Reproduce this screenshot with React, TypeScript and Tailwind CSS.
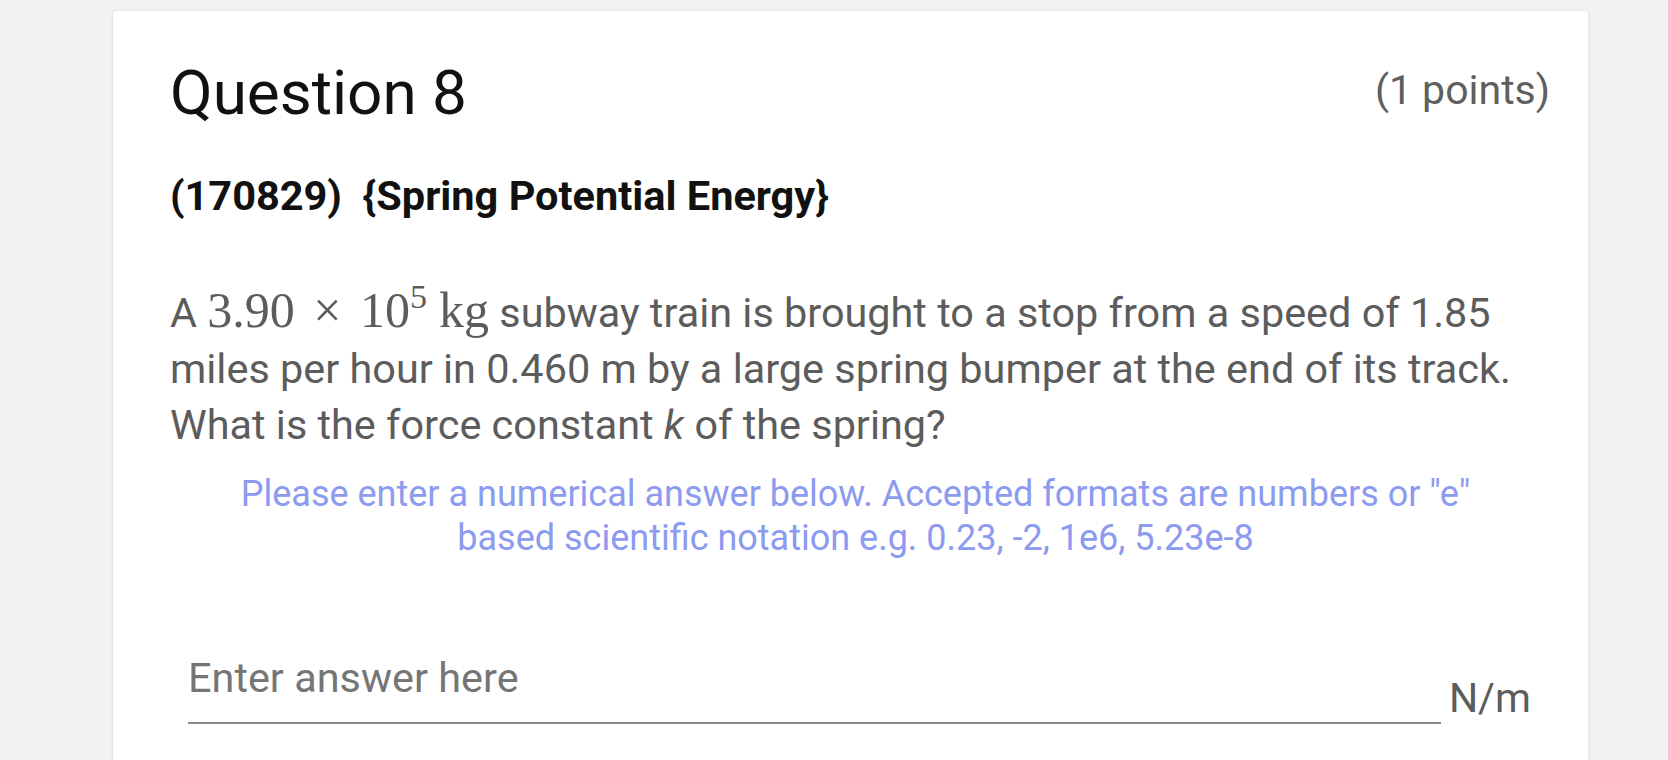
import React from "react";

export default function App() {
  return (
    <div className="h-[760px] w-full overflow-hidden bg-[#f2f2f2] font-['Roboto',sans-serif]">
      <div className="ml-[113px] mt-[11px] w-[1475px] h-[800px] rounded-[4px] bg-white shadow-[0_1px_4px_rgba(0,0,0,0.12)] pl-[57px] pr-[57px] pt-[51px]">
        <div className="flex items-center justify-between mr-[-19px]">
          <h1 className="text-[62px] leading-[62px] font-normal text-[#111111]">Question 8</h1>
          <span className="mb-[6px] text-[41px] leading-[41px] text-[#5f5f5f]">(1 points)</span>
        </div>
        <div className="mt-[51px] text-[41.5px] leading-[42px] font-bold text-[#111111] whitespace-pre">
          (170829)  {"{"}Spring Potential Energy{"}"}
        </div>
        <p className="mt-[68px] text-[41.4px] leading-[56px] text-[#5c5c5c]">
          A{" "}
          <span className="font-['Liberation_Serif',serif] text-[50px] leading-[0px]">
            3.90 <span className="mx-[6px]">×</span> 10
            <span className="text-[34px] leading-[0px] align-[19px]">5</span>
            <span className="ml-[12px]">kg</span>
          </span>{" "}
          subway train is brought to a stop from a speed of 1.85 miles per hour in 0.460 m by a large
          spring bumper at the end of its track. What is the force constant <i>k</i> of the spring?
        </p>
        <p className="mt-[19px] text-center text-[36px] leading-[44px] text-[#8c9af0] pl-[45px] pr-[35px]">
          Please enter a numerical answer below. Accepted formats are numbers or "e" based scientific
          notation e.g. 0.23, -2, 1e6, 5.23e-8
        </p>
        <div className="mt-[90px] flex items-end pl-[18px]">
          <input
            type="text"
            placeholder="Enter answer here"
            className="flex-1 h-[74px] pb-[16px] border-b-2 border-[#8a8a8a] bg-transparent text-[41.4px] leading-[56px] text-[#333] placeholder:text-[#757575] outline-none"
          />
          <span className="ml-[8px] mb-[-2px] text-[41px] leading-[56px] text-[#5c5c5c]">N/m</span>
        </div>
      </div>
    </div>
  );
}
